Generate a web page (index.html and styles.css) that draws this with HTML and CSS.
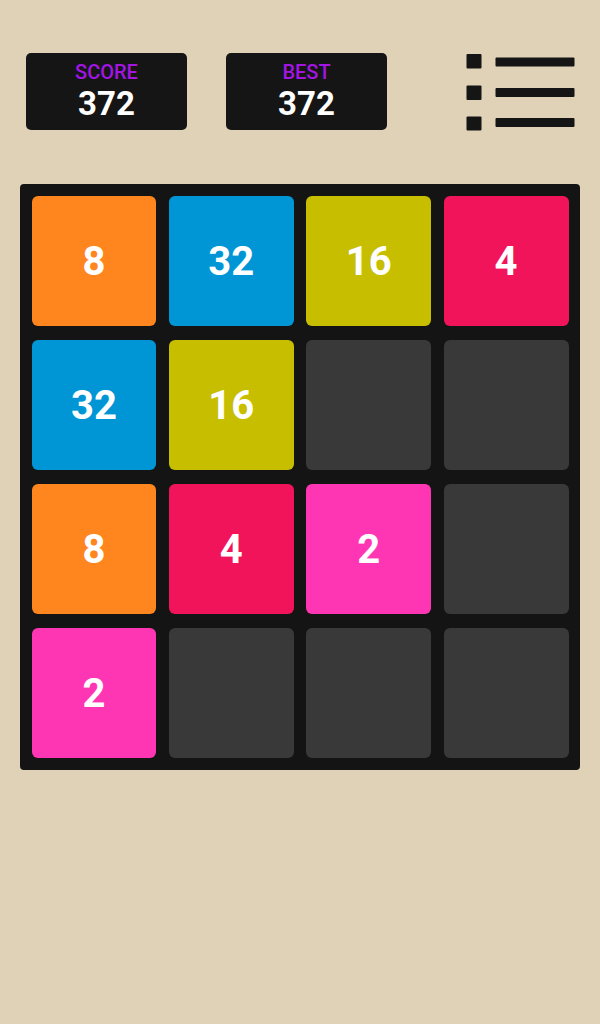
FILE: index.html
```html
<!DOCTYPE html>
<html lang="en">
<head>
<meta charset="utf-8">
<title>2048</title>
<link rel="stylesheet" href="styles.css">
</head>
<body>
<header class="topbar">
  <div class="scorebox">
    <span class="scorebox-label">SCORE</span>
    <span class="scorebox-value">372</span>
  </div>
  <div class="scorebox">
    <span class="scorebox-label">BEST</span>
    <span class="scorebox-value">372</span>
  </div>
  <button class="menu-btn" aria-label="Menu">
    <svg width="109" height="77" viewBox="0 0 109 77">
      <g fill="#151515">
        <rect x="0.5" y="0" width="15" height="14.5" rx="1"/>
        <rect x="29.5" y="3.5" width="79" height="9" rx="1"/>
        <rect x="0.5" y="31.5" width="15" height="14.5" rx="1"/>
        <rect x="29.5" y="34" width="79" height="9" rx="1"/>
        <rect x="0.5" y="62.5" width="15" height="14" rx="1"/>
        <rect x="29.5" y="64" width="79" height="9" rx="1"/>
      </g>
    </svg>
  </button>
</header>

<main class="board">
  <div class="tile t8">8</div>
  <div class="tile t32">32</div>
  <div class="tile t16">16</div>
  <div class="tile t4">4</div>

  <div class="tile t32">32</div>
  <div class="tile t16">16</div>
  <div class="tile"></div>
  <div class="tile"></div>

  <div class="tile t8">8</div>
  <div class="tile t4">4</div>
  <div class="tile t2">2</div>
  <div class="tile"></div>

  <div class="tile t2">2</div>
  <div class="tile"></div>
  <div class="tile"></div>
  <div class="tile"></div>
</main>
</body>
</html>
```

FILE: styles.css
```css
html, body {
  margin: 0;
  padding: 0;
}

body {
  background: #dfd2b6;
  font-family: Roboto, "Noto Sans", "Liberation Sans", sans-serif;
  width: 600px;
  height: 1024px;
  overflow: hidden;
}

.topbar {
  display: flex;
  align-items: flex-start;
  gap: 39px;
  height: 77px;
  padding: 53px 25px 0 26px;
}

.scorebox {
  width: 161px;
  height: 77px;
  box-sizing: border-box;
  background: #151515;
  border-radius: 5px;
  display: flex;
  flex-direction: column;
  align-items: center;
  justify-content: center;
  gap: 3px;
}

.scorebox-label {
  color: #a215e2;
  font-size: 20px;
  font-weight: 500;
  line-height: 22px;
}

.scorebox-value {
  color: #ffffff;
  font-size: 33px;
  font-weight: 700;
  line-height: 36px;
}

.menu-btn {
  margin-left: auto;
  margin-top: 1px;
  padding: 0;
  border: 0;
  background: none;
  display: block;
  line-height: 0;
}

.board {
  margin: 54px 0 0 20px;
  width: 560px;
  height: 586px;
  box-sizing: border-box;
  padding: 12px 11.5px;
  background: #141414;
  border-radius: 4px;
  display: grid;
  grid-template-columns: repeat(4, 1fr);
  grid-template-rows: repeat(4, 130px);
  column-gap: 12.5px;
  row-gap: 14px;
}

.tile {
  background: #383938;
  border-radius: 6px;
  display: flex;
  align-items: center;
  justify-content: center;
  color: #ffffff;
  font-size: 40px;
  font-weight: 700;
}

.t2  { background: #ff36b4; }
.t4  { background: #f2145a; }
.t8  { background: #ff851e; }
.t16 { background: #c8be00; }
.t32 { background: #0096d6; }
```
